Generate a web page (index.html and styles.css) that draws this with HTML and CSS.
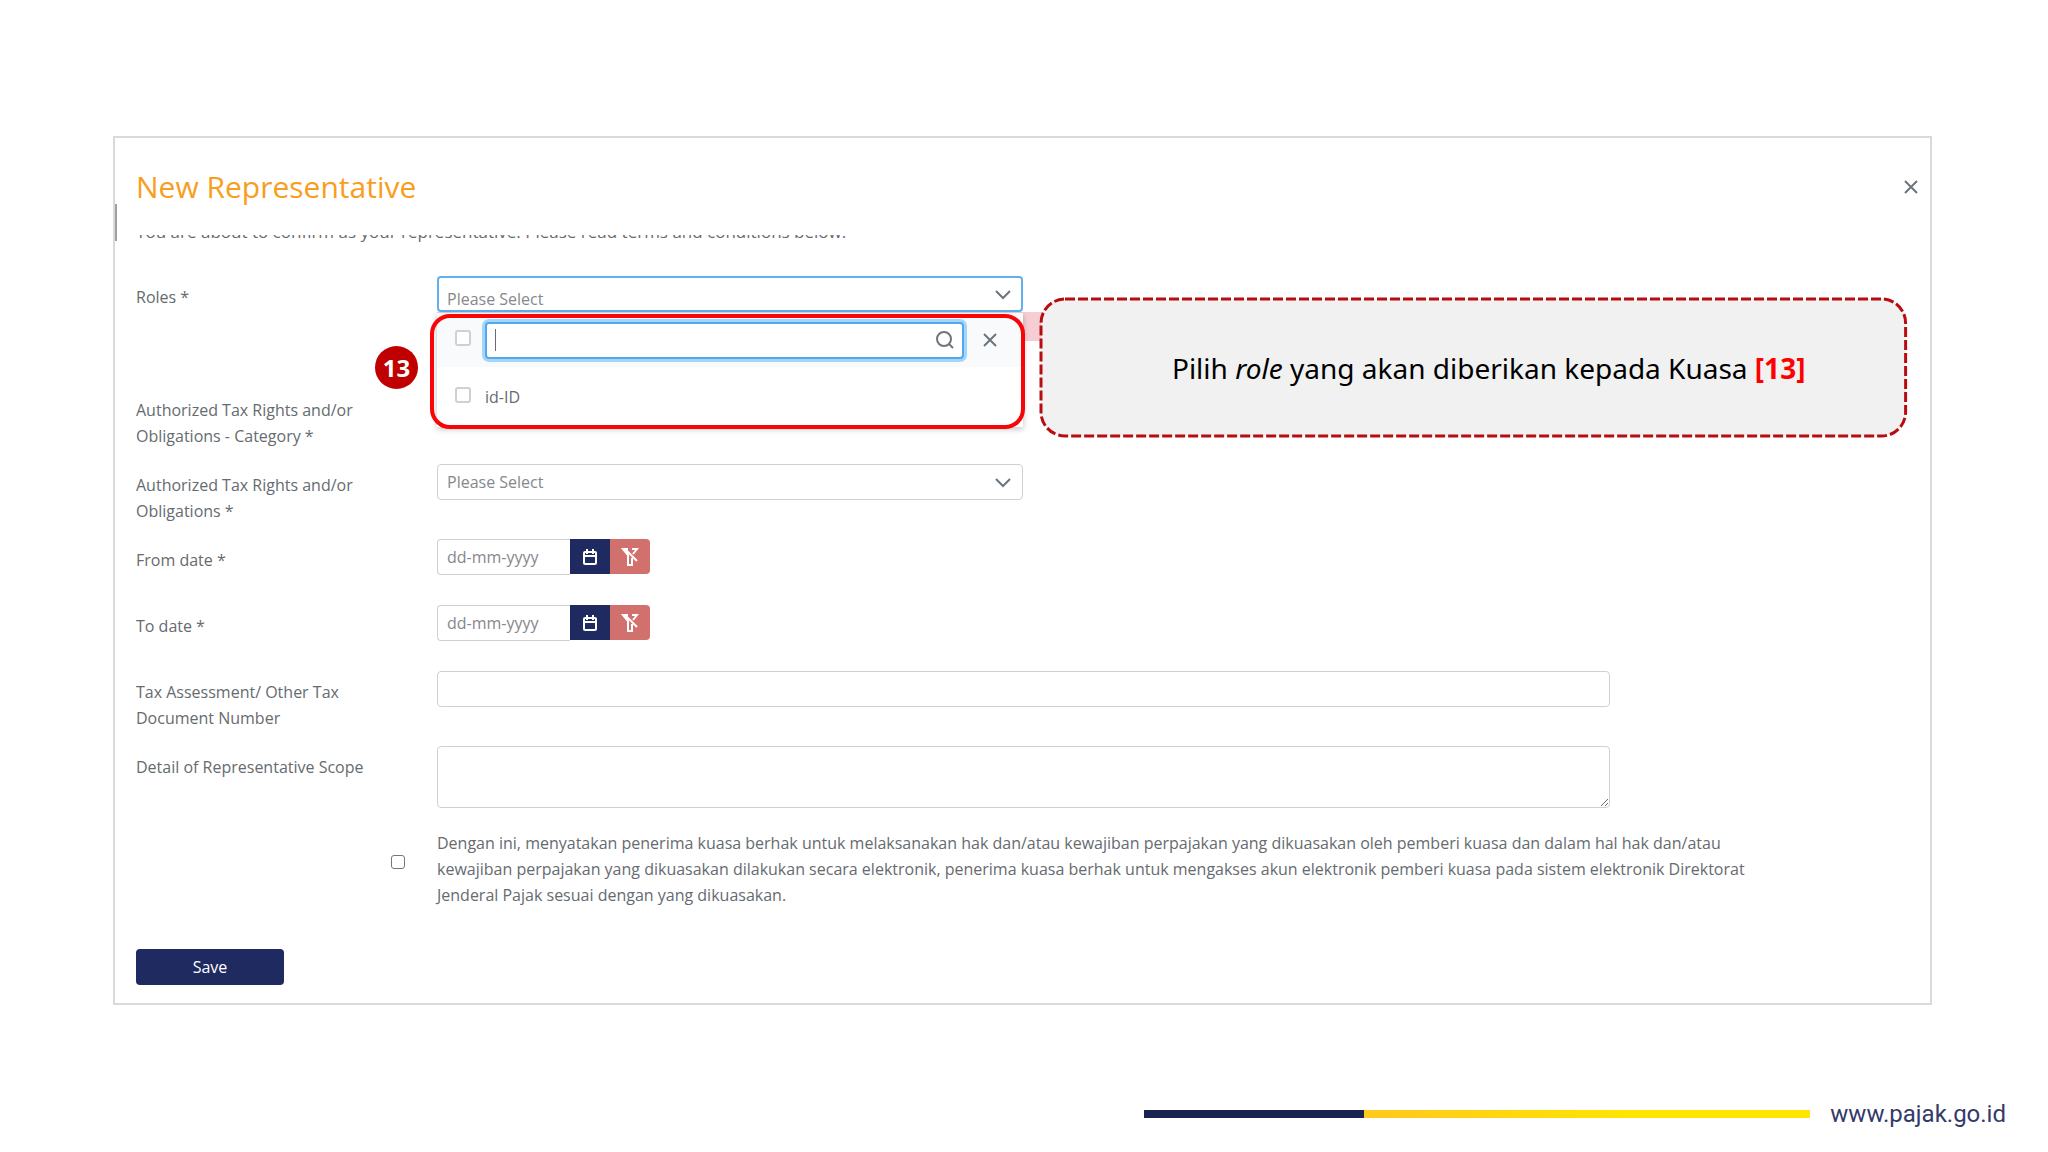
FILE: index.html
```html
<!DOCTYPE html>
<html lang="id">

<head>
    <meta charset="UTF-8">
    <meta name="viewport" content="width=device-width, initial-scale=1.0">
    <title>New Representative</title>
    <link rel="stylesheet" href="styles.css">
</head>

<body>
    <!-- Dialog -->
    <main class="dialog">
        <header class="dialog-header">
            <h1>New Representative</h1>
            <button type="button" class="icon-btn" aria-label="Close">
                <svg width="14" height="14" viewBox="0 0 14 14"><path d="M1 1l12 12M13 1L1 13"/></svg>
            </button>
        </header>
        <div class="scroll-thumb"></div>

        <form class="dialog-body">
            <p class="intro">You are about to confirm as your representative. Please read terms and conditions below.</p>

            <div class="form-row roles-row">
                <label for="roles">Roles *</label>
                <div class="field">
                    <div class="select-box active">
                        <select id="roles"><option>Please Select</option></select>
                        <svg class="chevron" width="16" height="10" viewBox="0 0 16 10"><path d="M1 1l7 7 7-7"/></svg>
                    </div>
                    <div class="error-bar"></div>

                    <!-- Opened list of roles -->
                    <div class="dropdown">
                        <div class="dropdown-header">
                            <input type="checkbox" aria-label="Select all">
                            <div class="search-box">
                                <input type="text" aria-label="Search role">
                                <span class="caret"></span>
                                <svg width="18" height="18" viewBox="0 0 18 18"><circle cx="8" cy="8" r="7"/><path d="M13 13l4 4"/></svg>
                            </div>
                            <button type="button" class="icon-btn" aria-label="Close list">
                                <svg width="14" height="14" viewBox="0 0 14 14"><path d="M1 1l12 12M13 1L1 13"/></svg>
                            </button>
                        </div>
                        <div class="dropdown-item">
                            <input type="checkbox" id="role-id">
                            <label for="role-id">id-ID</label>
                        </div>
                    </div>
                    <div class="highlight"></div>
                    <span class="step">13</span>

                    <div class="callout">
                        <svg class="callout-border" width="100%" height="100%"><rect x="2" y="2" rx="24"/></svg>
                        <p>Pilih <em>role</em> yang akan diberikan kepada Kuasa <strong>[13]</strong></p>
                    </div>
                </div>
            </div>

            <div class="form-row">
                <label for="category">Authorized Tax Rights and/or Obligations - Category *</label>
                <div class="field">
                    <div class="select-box">
                        <select id="category"><option></option></select>
                    </div>
                </div>
            </div>

            <div class="form-row">
                <label for="obligations">Authorized Tax Rights and/or Obligations *</label>
                <div class="field">
                    <div class="select-box">
                        <select id="obligations"><option>Please Select</option></select>
                        <svg class="chevron" width="16" height="10" viewBox="0 0 16 10"><path d="M1 1l7 7 7-7"/></svg>
                    </div>
                </div>
            </div>

            <div class="form-row">
                <label for="from-date">From date *</label>
                <div class="field date-group">
                    <input type="text" id="from-date" placeholder="dd-mm-yyyy">
                    <button type="button" class="calendar-btn" aria-label="Pick date">
                        <svg width="16" height="18" viewBox="0 0 16 18"><rect x="2" y="4" width="12" height="12" rx="1"/><path d="M2 8h12M5 1v5M11 1v5"/></svg>
                    </button>
                    <button type="button" class="clear-btn" aria-label="Clear date">
                        <svg width="18" height="20" viewBox="0 0 18 20"><path d="M7 2H2l5 6v10h4v-7M4 2l12 12M11 2h5l-4 5"/></svg>
                    </button>
                </div>
            </div>

            <div class="form-row">
                <label for="to-date">To date *</label>
                <div class="field date-group">
                    <input type="text" id="to-date" placeholder="dd-mm-yyyy">
                    <button type="button" class="calendar-btn" aria-label="Pick date">
                        <svg width="16" height="18" viewBox="0 0 16 18"><rect x="2" y="4" width="12" height="12" rx="1"/><path d="M2 8h12M5 1v5M11 1v5"/></svg>
                    </button>
                    <button type="button" class="clear-btn" aria-label="Clear date">
                        <svg width="18" height="20" viewBox="0 0 18 20"><path d="M7 2H2l5 6v10h4v-7M4 2l12 12M11 2h5l-4 5"/></svg>
                    </button>
                </div>
            </div>

            <div class="form-row">
                <label for="document-number">Tax Assessment/ Other Tax Document Number</label>
                <div class="field">
                    <input type="text" id="document-number" class="wide">
                </div>
            </div>

            <div class="form-row last-row">
                <label for="scope">Detail of Representative Scope</label>
                <div class="field">
                    <textarea id="scope" class="wide"></textarea>
                </div>
            </div>

            <div class="agreement">
                <input type="checkbox" id="agree">
                <label for="agree">Dengan ini, menyatakan penerima kuasa berhak untuk melaksanakan hak dan/atau kewajiban perpajakan yang dikuasakan oleh pemberi kuasa dan dalam hal hak dan/atau kewajiban perpajakan yang dikuasakan dilakukan secara elektronik, penerima kuasa berhak untuk mengakses akun elektronik pemberi kuasa pada sistem elektronik Direktorat Jenderal Pajak sesuai dengan yang dikuasakan.</label>
            </div>

            <button type="button" class="save-btn">Save</button>
        </form>
    </main>

    <footer class="page-footer">
        <div class="footer-line"></div>
        <a href="#">www.pajak.go.id</a>
    </footer>
</body>

</html>
```

FILE: styles.css
```css
* {
    box-sizing: border-box;
}

body {
    margin: 0;
    min-height: 100vh;
    display: flex;
    flex-direction: column;
    background-color: #fff;
    color: #666b70;
    font-family: "Open Sans", "Noto Sans", sans-serif;
    font-size: 16px;
    line-height: 26px;
}

input, select, textarea, button {
    font-family: inherit;
    font-size: inherit;
    color: inherit;
}

p {
    margin: 0;
}

svg {
    display: block;
    fill: none;
    stroke: #6c757d;
    stroke-width: 2;
}

/* Dialog */
.dialog {
    position: relative;
    margin: 136px 116px 0 113px;
    border: 2px solid #d8d9da;
}

.dialog-header {
    display: flex;
    justify-content: space-between;
    align-items: center;
    height: 97px;
    padding: 0 12px 0 21px;
}

.dialog-header h1 {
    margin: 0;
    color: #f99d1c;
    font-size: 30px;
    font-weight: 400;
    line-height: 40px;
}

.icon-btn {
    padding: 0;
    border: none;
    background: none;
    cursor: pointer;
}

.scroll-thumb {
    position: absolute;
    left: 0;
    top: 66px;
    width: 2px;
    height: 37px;
    background-color: #a0a0a0;
}

.dialog-body {
    padding: 0 27px 18px 21px;
}

/* Text scrolled partly under the header */
.intro {
    display: flex;
    align-items: flex-end;
    height: 10px;
    margin-bottom: 31px;
    overflow: hidden;
    font-size: 17px;
}

/* Form rows */
.form-row {
    display: grid;
    grid-template-columns: 301px 1fr;
    align-items: start;
}

.form-row > label {
    max-width: 250px;
    padding: 8px 0 15px;
}

.field {
    position: relative;
    margin-bottom: 30px;
}

.roles-row .field {
    margin-bottom: 48px;
}

.last-row .field {
    margin-bottom: 22px;
}

.select-box {
    position: relative;
    width: 40%;
}

select,
textarea,
.field > input {
    display: block;
    height: 36px;
    padding: 0 9px;
    border: 1px solid #ced0d2;
    border-radius: 4px;
    background-color: #fff;
    outline: none;
}

select {
    width: 100%;
    appearance: none;
    color: #85888c;
}

.active select {
    padding: 10px 8px 0;
    border: 2px solid #62b0f0;
}

.chevron {
    position: absolute;
    right: 12px;
    top: 14px;
}

.field > .wide {
    width: 80%;
}

textarea {
    height: 62px;
}

.error-bar {
    width: 45%;
    height: 29px;
    background-color: #f6cdd3;
}

/* Dropdown */
.dropdown {
    position: absolute;
    left: 0;
    top: 37px;
    z-index: 1;
    width: 40%;
    background-color: #fff;
    box-shadow: 0 2px 6px rgba(0, 0, 0, 0.25);
}

.dropdown-header,
.dropdown-item {
    display: flex;
    align-items: center;
    padding: 0 26px 0 18px;
}

.dropdown-header {
    height: 54px;
    background-color: #f8fafc;
}

.dropdown-item {
    height: 60px;
}

.dropdown-item label {
    margin-left: 14px;
}

input[type="checkbox"] {
    flex: none;
    width: 16px;
    height: 16px;
    margin: 0;
    appearance: none;
    border: 2px solid #ced0d2;
    border-radius: 3px;
    background-color: #fff;
}

.dropdown input[type="checkbox"] {
    margin-bottom: 4px;
}

.search-box {
    position: relative;
    flex: 1;
    display: flex;
    align-items: center;
    margin: 0 19px 0 14px;
    padding: 0 8px 0 10px;
    border: 2px solid #52a8ee;
    border-radius: 4px;
    background-color: #fff;
    box-shadow: 0 0 0 3px #a6d5fa;
}

.search-box input {
    flex: 1;
    height: 33px;
    padding: 0;
    border: none;
    background: none;
    outline: none;
}

.search-box .caret {
    position: absolute;
    left: 8px;
    width: 1px;
    height: 22px;
    background-color: #666b70;
}

/* Step marks */
.highlight {
    position: absolute;
    left: -7px;
    top: 38px;
    z-index: 2;
    width: calc(40% + 9px);
    height: 115px;
    border: 4px solid #f80508;
    border-radius: 20px;
    pointer-events: none;
}

.step {
    position: absolute;
    left: -62px;
    top: 70px;
    width: 43px;
    height: 43px;
    border-radius: 50%;
    background-color: #c00000;
    color: #fff;
    font-size: 24px;
    font-weight: 700;
    line-height: 43px;
    text-align: center;
}

.callout {
    position: absolute;
    left: calc(40% + 16px);
    right: -5px;
    top: 21px;
    z-index: 2;
    display: flex;
    justify-content: center;
    align-items: center;
    height: 141px;
    padding-left: 30px;
    color: #000;
    font-family: "Noto Sans", sans-serif;
    font-size: 28px;
}

.callout p {
    position: relative;
}

.callout strong {
    color: #f00;
}

.callout-border {
    position: absolute;
    left: 0;
    top: 0;
}

.callout-border rect {
    width: calc(100% - 4px);
    height: calc(100% - 4px);
    fill: #f1f1f1;
    stroke: #b80d10;
    stroke-width: 3;
    stroke-dasharray: 10 3;
}

/* Date fields */
.date-group {
    display: flex;
}

.date-group input {
    width: 133px;
    border-right: none;
    border-radius: 4px 0 0 4px;
}

.date-group input::placeholder {
    color: #85888c;
}

.date-group button {
    display: flex;
    justify-content: center;
    align-items: center;
    width: 40px;
    height: 35px;
    padding: 0;
    border: none;
}

.date-group svg {
    stroke: #fff;
}

.calendar-btn {
    background-color: #1f2a60;
}

.date-group .clear-btn {
    border-radius: 0 4px 4px 0;
    background-color: #d2706e;
}

/* Agreement and save */
.agreement {
    display: flex;
    align-items: flex-start;
    padding-left: 255px;
}

.agreement input[type="checkbox"] {
    width: 14px;
    height: 14px;
    margin: 25px 32px 0 0;
    border: 1px solid #767676;
}

.agreement label {
    max-width: 1350px;
}

.save-btn {
    display: block;
    width: 148px;
    height: 36px;
    margin-top: 41px;
    border: none;
    border-radius: 4px;
    background-color: #1f2a60;
    color: #fff;
}

/* Footer */
.page-footer {
    display: flex;
    justify-content: flex-end;
    align-items: center;
    gap: 20px;
    margin-top: auto;
    padding: 20px 42px 25px 0;
}

.footer-line {
    width: 666px;
    height: 8px;
    background: linear-gradient(to right, #1b2350 33%, #ffc81e 33%, #ffe600 75%);
}

.page-footer a {
    color: #343a69;
    font-family: Roboto, sans-serif;
    font-size: 24px;
    text-decoration: none;
}
```
